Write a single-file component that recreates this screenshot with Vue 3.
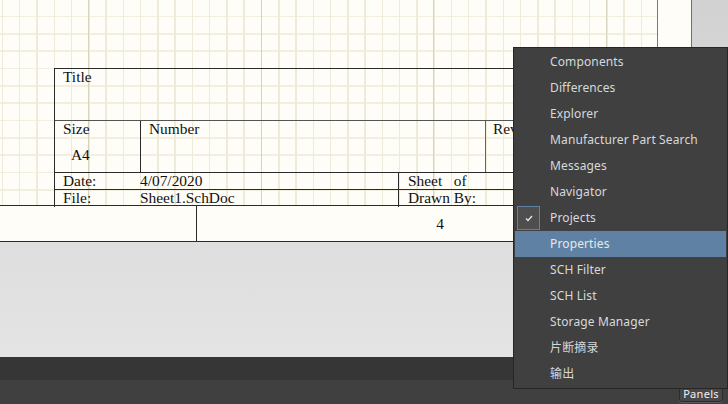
<template>
  <div class="app">
    <div class="workspace">
      <div class="sheet">
        <div class="drawing">
          <div class="title-block">
            <div class="tb-row tb-title"><span class="pad-title">Title</span></div>
            <div class="tb-row tb-number">
              <div class="cell-size">
                <span>Size</span>
                <span class="size-val">A4</span>
              </div>
              <div class="cell-number">Number</div>
              <div class="cell-rev">Revision</div>
            </div>
            <div class="tb-row tb-small">
              <span class="lbl">Date:</span>
              <span class="val">4/07/2020</span>
              <span class="right-cell">Sheet&nbsp;&nbsp;&nbsp;of</span>
            </div>
            <div class="tb-row tb-small">
              <span class="lbl">File:</span>
              <span class="val">Sheet1.SchDoc</span>
              <span class="right-cell">Drawn By:</span>
            </div>
          </div>
        </div>
        <div class="ruler">
          <div class="ruler-cell first"></div>
          <div class="ruler-cell second">4</div>
        </div>
      </div>
    </div>

    <div class="dark-bar"></div>
    <div class="status-bar">
      <button class="panels-btn">Panels</button>
    </div>

    <ul class="menu">
      <li
        v-for="item in items"
        :key="item"
        class="menu-item"
        :class="{ active: item === 'Properties' }"
      >
        <span v-if="item === 'Projects'" class="check">
          <svg width="8" height="7" viewBox="0 0 8 7">
            <path d="M1 3.5 L3 5.5 L7 1" fill="none" stroke="#e8e8e8" stroke-width="1.3" />
          </svg>
        </span>
        {{ item }}
      </li>
    </ul>
  </div>
</template>

<script setup>
const items = [
  'Components',
  'Differences',
  'Explorer',
  'Manufacturer Part Search',
  'Messages',
  'Navigator',
  'Projects',
  'Properties',
  'SCH Filter',
  'SCH List',
  'Storage Manager',
  '片断摘录',
  '输出',
];
</script>

<style>
html,
body {
  margin: 0;
  background: #404040;
}
</style>

<style scoped>
.app {
  position: relative;
  width: 728px;
  height: 404px;
  overflow: hidden;
  display: flex;
  flex-direction: column;
}

.workspace {
  height: 357px;
  flex: none;
  background: linear-gradient(180deg, #d2d2d2 0, #e4e4e4 100%);
}

.sheet {
  width: 691px;
  height: 241px;
  background: #fffdf8;
  border-right: 1px solid #6e6e6e;
  border-bottom: 1px solid #2a2a2a;
  display: flex;
  flex-direction: column;
}

.drawing {
  width: 658px;
  height: 206px;
  flex: none;
  box-sizing: border-box;
  padding: 68px 0 0 54px;
  border-right: 1px solid #7a7a7a;
  border-bottom: 1px solid #2a2a2a;
  background-color: #fffdf8;
  background-image:
    repeating-linear-gradient(90deg, transparent 0 88px, #d8d3bd 88px 89px, transparent 89px 172.7px),
    repeating-linear-gradient(90deg, transparent 0 1.7px, #f0ebd9 1.7px 3.2px, transparent 3.2px 17.27px),
    repeating-linear-gradient(180deg, transparent 0 15.7px, #f2eee0 15.7px 17.2px, transparent 17.2px 17.33px);
}

.title-block {
  font-family: "Liberation Serif", serif;
  font-size: 15.4px;
  color: #111;
  border-left: 1px solid #2a2a2a;
  border-top: 1px solid #2a2a2a;
}

.tb-row {
  display: flex;
  box-sizing: border-box;
  line-height: 15px;
}

.tb-title {
  height: 52px;
  border-bottom: 1px solid #555;
}

.pad-title {
  padding-left: 8px;
}

.tb-number {
  height: 52px;
  border-bottom: 1px solid #2a2a2a;
}

.cell-size {
  width: 86px;
  flex: none;
  padding-left: 8px;
  box-sizing: border-box;
  border-right: 1px solid #2a2a2a;
  display: flex;
  flex-direction: column;
  gap: 11px;
}

.size-val {
  padding-left: 8px;
}

.cell-number {
  width: 345px;
  flex: none;
  padding-left: 8px;
  box-sizing: border-box;
  border-right: 1px solid #666;
}

.cell-rev {
  padding-left: 7px;
}

.tb-small {
  height: 17px;
  border-bottom: 1px solid #2a2a2a;
}

.tb-small:last-child {
  border-bottom: 0;
}

.lbl {
  width: 77px;
  flex: none;
  padding-left: 8px;
  box-sizing: border-box;
  white-space: nowrap;
}

.val {
  width: 266px;
  flex: none;
  box-sizing: border-box;
  padding-left: 8px;
  white-space: nowrap;
}

.right-cell {
  flex: 1;
  padding-left: 9px;
  border-left: 1px solid #2a2a2a;
}

.ruler {
  flex: 1;
  display: flex;
  font-family: "Liberation Serif", serif;
  font-size: 15.4px;
  color: #111;
}

.ruler-cell {
  display: flex;
  align-items: center;
  justify-content: center;
  padding-top: 1px;
}

.first {
  width: 196px;
  border-right: 1px solid #2a2a2a;
}

.second {
  width: 486px;
}

.dark-bar {
  height: 23px;
  flex: none;
  background: #363636;
}

.status-bar {
  flex: 1;
  background: #404040;
  display: flex;
  justify-content: flex-end;
  align-items: flex-start;
  padding: 7px 5px 0 0;
}

.panels-btn {
  width: 44px;
  height: 15px;
  padding: 0 0 2px;
  border: 1px solid #2c2c2c;
  border-radius: 3px;
  box-shadow: 0 1px 0 #5a5a5a;
  background: #484848;
  color: #f0f0f0;
  font-family: "Noto Sans", sans-serif;
  font-size: 11px;
  line-height: 12px;
  letter-spacing: 0.3px;
}

.menu {
  position: absolute;
  left: 513px;
  top: 47px;
  width: 215px;
  height: 342px;
  margin: 0;
  padding: 1px 1px 0;
  box-sizing: border-box;
  list-style: none;
  background: #404040;
  border: 1px solid #262626;
}

.menu-item {
  position: relative;
  height: 26px;
  line-height: 26px;
  padding-left: 35px;
  color: #d6d9dc;
  font-family: "Noto Sans", "Noto Sans CJK SC", sans-serif;
  font-size: 12px;
  letter-spacing: 0.13px;
}

.menu-item.active {
  background: #5f82a4;
  color: #e4e8ec;
}

.check {
  position: absolute;
  left: 2px;
  top: 1px;
  width: 23px;
  height: 24px;
  box-sizing: border-box;
  border: 1px solid #5f82a4;
  background: #4e4e4e;
  display: flex;
  align-items: center;
  justify-content: center;
}
</style>
